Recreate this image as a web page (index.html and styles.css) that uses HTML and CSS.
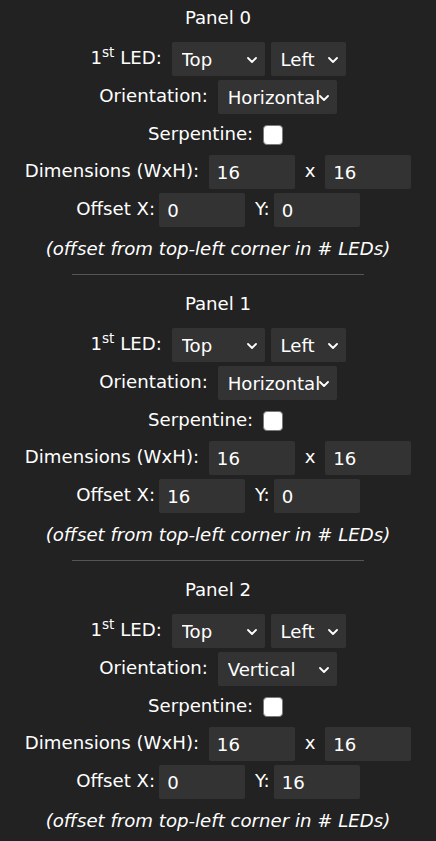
FILE: index.html
```html
<!DOCTYPE html>
<html>
<head>
<meta charset="utf-8">
<link rel="stylesheet" href="styles.css">
</head>
<body>
<div class="panel">
  <div class="title">Panel 0</div>
  <div class="row">1<sup>st</sup> LED: <span class="sw sw-tb"><select><option>Top</option><option>Bottom</option></select><svg class="chev" viewBox="0 0 10 6"><path d="M1 1L5 5L9 1"/></svg></span><span class="sw sw-lr"><select><option>Left</option><option>Right</option></select><svg class="chev" viewBox="0 0 10 6"><path d="M1 1L5 5L9 1"/></svg></span></div>
  <div class="row">Orientation: <span class="sw sw-or"><select><option>Horizontal</option><option>Vertical</option></select><svg class="chev" viewBox="0 0 10 6"><path d="M1 1L5 5L9 1"/></svg></span></div>
  <div class="row row-chk">Serpentine: <input type="checkbox" class="chk"></div>
  <div class="row">Dimensions (WxH): <input class="num" type="number" value="16"> x <input class="num" type="number" value="16"></div>
  <div class="row">Offset X:<input class="num" type="number" value="0"> Y:<input class="num" type="number" value="0"></div>
  <div class="note"><i>(offset from top-left corner in # LEDs)</i></div>
  <hr class="sep">
</div>
<div class="panel">
  <div class="title">Panel 1</div>
  <div class="row">1<sup>st</sup> LED: <span class="sw sw-tb"><select><option>Top</option><option>Bottom</option></select><svg class="chev" viewBox="0 0 10 6"><path d="M1 1L5 5L9 1"/></svg></span><span class="sw sw-lr"><select><option>Left</option><option>Right</option></select><svg class="chev" viewBox="0 0 10 6"><path d="M1 1L5 5L9 1"/></svg></span></div>
  <div class="row">Orientation: <span class="sw sw-or"><select><option>Horizontal</option><option>Vertical</option></select><svg class="chev" viewBox="0 0 10 6"><path d="M1 1L5 5L9 1"/></svg></span></div>
  <div class="row row-chk">Serpentine: <input type="checkbox" class="chk"></div>
  <div class="row">Dimensions (WxH): <input class="num" type="number" value="16"> x <input class="num" type="number" value="16"></div>
  <div class="row">Offset X:<input class="num" type="number" value="16"> Y:<input class="num" type="number" value="0"></div>
  <div class="note"><i>(offset from top-left corner in # LEDs)</i></div>
  <hr class="sep">
</div>
<div class="panel">
  <div class="title">Panel 2</div>
  <div class="row">1<sup>st</sup> LED: <span class="sw sw-tb"><select><option>Top</option><option>Bottom</option></select><svg class="chev" viewBox="0 0 10 6"><path d="M1 1L5 5L9 1"/></svg></span><span class="sw sw-lr"><select><option>Left</option><option>Right</option></select><svg class="chev" viewBox="0 0 10 6"><path d="M1 1L5 5L9 1"/></svg></span></div>
  <div class="row">Orientation: <span class="sw sw-or"><select><option>Vertical</option><option>Horizontal</option></select><svg class="chev" viewBox="0 0 10 6"><path d="M1 1L5 5L9 1"/></svg></span></div>
  <div class="row row-chk">Serpentine: <input type="checkbox" class="chk"></div>
  <div class="row">Dimensions (WxH): <input class="num" type="number" value="16"> x <input class="num" type="number" value="16"></div>
  <div class="row">Offset X:<input class="num" type="number" value="0"> Y:<input class="num" type="number" value="16"></div>
  <div class="note"><i>(offset from top-left corner in # LEDs)</i></div>
</div>
</body>
</html>
```
FILE: styles.css
```css
html, body {
  margin: 0;
  padding: 0;
  background: #222;
  color: #fff;
  font-family: "DejaVu Sans", Verdana, sans-serif;
  font-size: 18.15px;
}
.panel {
  height: 286px;
  text-align: center;
}
.title {
  padding-top: 7px;
  line-height: 22px;
  margin-bottom: 10px;
}
.row {
  height: 38px;
  line-height: 38px;
  white-space: nowrap;
}
.row-chk {
  height: 37px;
  line-height: 37px;
}
sup {
  font-size: 0.75em;
  line-height: 0;
  vertical-align: 0.5em;
}
.sw {
  position: relative;
  display: inline-block;
  vertical-align: middle;
  margin: 2px 4px;
  height: 34px;
}
.sw-lr {
  margin-left: 2px;
}
.row > .sw:last-child,
.row > input.num:last-child {
  margin-right: 0;
}
.sw select {
  -webkit-appearance: none;
  appearance: none;
  display: block;
  font-family: "DejaVu Sans", Verdana, sans-serif;
  font-size: 18.15px;
  background: #333;
  color: #fff;
  border: 0;
  border-radius: 2px;
  height: 34px;
  margin: 0;
  padding: 0 0 0 10px;
  box-sizing: border-box;
  outline: none;
}
.sw-tb select { width: 93px; }
.sw-lr select { width: 75px; }
.sw-or select { width: 119px; }
.chev {
  position: absolute;
  right: 8px;
  top: 15px;
  width: 10px;
  height: 6px;
  fill: none;
  stroke: #fff;
  stroke-width: 1.8;
  stroke-linecap: round;
  stroke-linejoin: round;
  pointer-events: none;
}
input.num {
  font-family: "DejaVu Sans", Verdana, sans-serif;
  font-size: 18.15px;
  background: #333;
  color: #fff;
  border: 0;
  border-radius: 2px;
  height: 34px;
  width: 86px;
  margin: 2px 4px;
  padding: 0 8px;
  vertical-align: middle;
  box-sizing: border-box;
  outline: none;
}
.chk {
  -webkit-appearance: none;
  appearance: none;
  width: 20px;
  height: 20px;
  margin: 0 5px 0 4px;
  background: #fff;
  border: 1.5px solid #7a7a7a;
  border-radius: 4px;
  box-sizing: border-box;
  vertical-align: middle;
}
.note {
  margin-top: 10px;
  line-height: 22px;
}
.sep {
  width: 292px;
  margin: 14px auto 0;
  border: 0;
  height: 1px;
  background: #555;
}
```
